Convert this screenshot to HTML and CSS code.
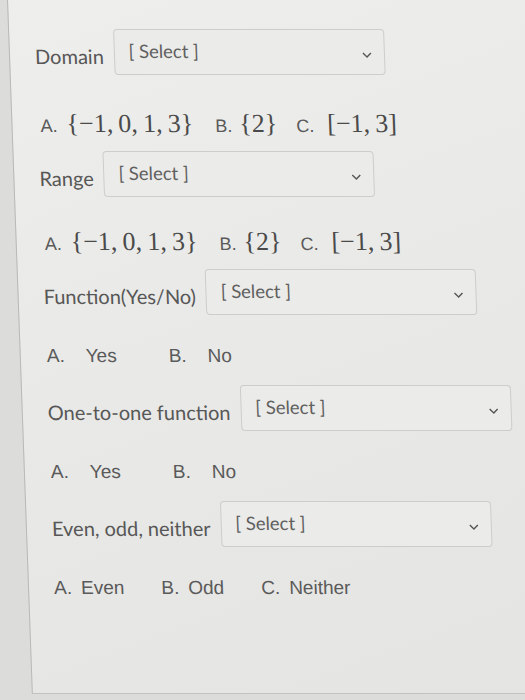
FILE: index.html
```html
<!DOCTYPE html>
<html lang="en">
<head>
<meta charset="utf-8">
<title>Quiz</title>
<link rel="stylesheet" href="styles.css">
</head>
<body>
<div class="card">
  <div class="q">
    <span class="label">Domain</span>
    <div class="sel"><span>[ Select ]</span><svg class="chev" viewBox="0 0 10 6" width="10" height="6"><polyline points="1,1 5,5 9,1"/></svg></div>
  </div>
  <div class="opts math-opts">
    <span class="opt"><span class="let">A.</span><span class="m">{&minus;1,&thinsp;0,&thinsp;1,&thinsp;3}</span></span>
    <span class="opt"><span class="let">B.</span><span class="m">{2}</span></span>
    <span class="opt"><span class="let">C.</span><span class="m sp">[&minus;1,&thinsp;3]</span></span>
  </div>

  <div class="q">
    <span class="label">Range</span>
    <div class="sel"><span>[ Select ]</span><svg class="chev" viewBox="0 0 10 6" width="10" height="6"><polyline points="1,1 5,5 9,1"/></svg></div>
  </div>
  <div class="opts math-opts">
    <span class="opt"><span class="let">A.</span><span class="m">{&minus;1,&thinsp;0,&thinsp;1,&thinsp;3}</span></span>
    <span class="opt"><span class="let">B.</span><span class="m">{2}</span></span>
    <span class="opt"><span class="let">C.</span><span class="m sp">[&minus;1,&thinsp;3]</span></span>
  </div>

  <div class="q">
    <span class="label">Function(Yes/No)</span>
    <div class="sel"><span>[ Select ]</span><svg class="chev" viewBox="0 0 10 6" width="10" height="6"><polyline points="1,1 5,5 9,1"/></svg></div>
  </div>
  <div class="opts yn">
    <span class="opt"><span class="let">A.</span><span>Yes</span></span>
    <span class="opt"><span class="let">B.</span><span>No</span></span>
  </div>

  <div class="q">
    <span class="label">One-to-one function</span>
    <div class="sel"><span>[ Select ]</span><svg class="chev" viewBox="0 0 10 6" width="10" height="6"><polyline points="1,1 5,5 9,1"/></svg></div>
  </div>
  <div class="opts yn">
    <span class="opt"><span class="let">A.</span><span>Yes</span></span>
    <span class="opt"><span class="let">B.</span><span>No</span></span>
  </div>

  <div class="q">
    <span class="label">Even, odd, neither</span>
    <div class="sel"><span>[ Select ]</span><svg class="chev" viewBox="0 0 10 6" width="10" height="6"><polyline points="1,1 5,5 9,1"/></svg></div>
  </div>
  <div class="opts eon">
    <span class="opt"><span class="let">A.</span><span>Even</span></span>
    <span class="opt"><span class="let">B.</span><span>Odd</span></span>
    <span class="opt"><span class="let">C.</span><span>Neither</span></span>
  </div>
</div>
</body>
</html>
```
FILE: styles.css
```css
html {
  background: #dcdcda;
}
body {
  margin: 0;
  width: 525px;
  height: 700px;
  overflow: hidden;
  background: #dcdcda;
}
.card {
  margin-left: 7px;
  width: 580px;
  height: 694px;
  box-sizing: border-box;
  padding: 29px 0 0 25px;
  border-left: 1px solid #b9b9b7;
  border-bottom: 1px solid #c2c2c0;
  background: linear-gradient(160deg, #eeeeec 0%, #e9e9e7 45%, #e4e4e2 100%);
  transform: skewX(2.05deg);
  transform-origin: 0 0;
}
.q {
  display: flex;
  align-items: center;
}
.label {
  font-family: Lato, "Liberation Sans", sans-serif;
  font-size: 20px;
  color: #575757;
  padding-top: 8px;
  margin-right: 10px;
}
.sel {
  width: 271px;
  height: 46px;
  box-sizing: border-box;
  border: 1px solid #cdcdcb;
  border-radius: 4px;
  background: #ebebe9;
  display: flex;
  align-items: center;
  justify-content: space-between;
  padding: 0 12px 0 14px;
  font-family: Lato, "Liberation Sans", sans-serif;
  font-size: 18.5px;
  color: #606060;
}
.sel span {
  margin-top: -3px;
}
.chev {
  margin-top: 6px;
  fill: none;
  stroke: #555;
  stroke-width: 1.4;
}
.opts {
  display: flex;
  align-items: baseline;
  height: 24px;
  margin: 30px 0 16px 3px;
  font-family: "Liberation Sans", Arial, sans-serif;
  font-size: 19px;
  color: #5a5a5a;
}
.q:first-child + .opts {
  margin-top: 34px;
}
.opt {
  display: flex;
  align-items: baseline;
}
.let {
  margin-right: 6px;
}
.math-opts {
  font-size: 18px;
  margin-bottom: 18px;
}
.math-opts .let {
  margin-right: 7px;
}
.math-opts .opt:first-child .let {
  margin-right: 9px;
}
.m {
  font-family: "Liberation Serif", "Times New Roman", serif;
  font-size: 26px;
  color: #4a4a4a;
}
.m.sp {
  margin-left: 6px;
}
.math-opts .opt {
  margin-right: 22px;
}
.math-opts .opt:nth-child(2) {
  margin-right: 19px;
}
.yn {
  margin-left: 1px;
}
.yn .let {
  margin-right: 21px;
}
.yn .opt {
  margin-right: 52px;
}
.eon {
  margin-left: 0;
}
.eon .let {
  margin-right: 9px;
}
.eon .opt {
  margin-right: 37px;
}
```
